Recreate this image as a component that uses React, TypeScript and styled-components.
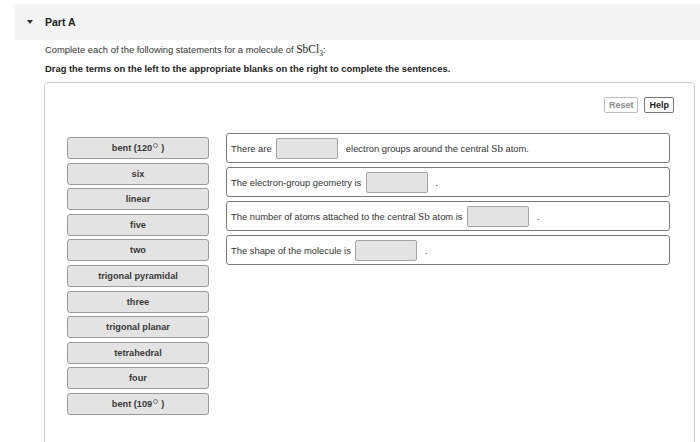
import React from "react";
import styled, { createGlobalStyle } from "styled-components";

const GlobalStyle = createGlobalStyle`
  html, body {
    margin: 0;
    padding: 0;
    background: #ffffff;
    font-family: "Liberation Sans", Arial, sans-serif;
    color: #333333;
  }
`;

const Page = styled.div`
  width: 700px;
  height: 442px;
  overflow: hidden;
  padding-top: 4px;
  box-sizing: border-box;
`;

const PartHeader = styled.div`
  margin-left: 15px;
  height: 36px;
  background: #f4f4f4;
  display: flex;
  align-items: center;
  padding-left: 12px;
  gap: 12px;
  font-size: 10.5px;
  font-weight: bold;
  color: #222;
`;

const Caret = styled.span`
  width: 0;
  height: 0;
  border-left: 3.5px solid transparent;
  border-right: 3.5px solid transparent;
  border-top: 4px solid #333;
`;

const Body = styled.div`
  padding-left: 45px;
  padding-right: 5px;
`;

const Intro = styled.p`
  margin: 3px 0 0;
  height: 14px;
  font-size: 9.4px;
  line-height: 14px;
  color: #333;
`;

const Instruction = styled.p`
  margin: 5px 0 0;
  height: 14px;
  font-size: 9.4px;
  font-weight: bold;
  line-height: 14px;
  color: #222;
`;

const Formula = styled.span`
  font-family: "Liberation Serif", "Times New Roman", serif;
  font-size: 11.5px;
  line-height: 0;
  color: #222;
`;

const Sub = styled.sub`
  font-size: 7.5px;
  line-height: 0;
`;

const Panel = styled.div`
  margin: 6px 0 0 -1px;
  border: 1px solid #cfcfcf;
  border-radius: 4px;
  height: 400px;
  padding: 14px 20px 0 22px;
  box-sizing: border-box;
`;

const Toolbar = styled.div`
  display: flex;
  justify-content: flex-end;
  gap: 6px;
`;

const ToolButton = styled.button<{ $muted?: boolean }>`
  font-family: "Liberation Sans", Arial, sans-serif;
  font-size: 9px;
  font-weight: bold;
  height: 16px;
  padding: 0 4px;
  background: #fff;
  border: 1px solid ${({ $muted }) => ($muted ? "#bdbdbd" : "#777")};
  color: ${({ $muted }) => ($muted ? "#8a8a8a" : "#222")};
  border-radius: 2px;
`;

const Workspace = styled.div`
  display: flex;
  gap: 17px;
  margin-top: 20px;
`;

const TermList = styled.div`
  display: flex;
  flex-direction: column;
  gap: 3.6px;
  width: 142px;
  margin-top: 4px;
`;

const Term = styled.div`
  height: 22px;
  box-sizing: border-box;
  background: #e3e3e3;
  border: 1px solid #9a9a9a;
  border-radius: 3px;
  display: flex;
  align-items: center;
  justify-content: center;
  font-size: 9.2px;
  font-weight: bold;
  color: #3a3a3a;
`;

const Degree = styled.span`
  display: inline-block;
  width: 3px;
  height: 3px;
  border: 0.8px solid #777;
  border-radius: 50%;
  align-self: flex-start;
  margin: 5px 3px 0 1px;
`;

const SentenceList = styled.div`
  display: flex;
  flex-direction: column;
  gap: 4px;
  width: 444px;
`;

const Sentence = styled.div`
  height: 30px;
  box-sizing: border-box;
  border: 1px solid #7a7a7a;
  border-radius: 3px;
  display: flex;
  align-items: center;
  padding-left: 4px;
  font-size: 9.4px;
  color: #333;
  white-space: pre;
`;

const Blank = styled.span`
  display: inline-block;
  width: 62px;
  height: 21px;
  box-sizing: border-box;
  background: #e4e4e4;
  border: 1px solid #a5a5a5;
  border-radius: 2px;
  margin: 0 5px 0 2px;
`;

const Sb = styled.span`
  font-family: "Liberation Serif", "Times New Roman", serif;
  font-size: 11px;
`;

const terms: { label: string; degree?: boolean }[] = [
  { label: "bent (120", degree: true },
  { label: "six" },
  { label: "linear" },
  { label: "five" },
  { label: "two" },
  { label: "trigonal pyramidal" },
  { label: "three" },
  { label: "trigonal planar" },
  { label: "tetrahedral" },
  { label: "four" },
  { label: "bent (109", degree: true },
];

export default function App() {
  return (
    <Page>
      <GlobalStyle />
      <PartHeader>
        <Caret />
        Part A
      </PartHeader>
      <Body>
        <Intro>
          Complete each of the following statements for a molecule of{" "}
          <Formula>
            SbCl<Sub>3</Sub>
          </Formula>
          :
        </Intro>
        <Instruction>
          Drag the terms on the left to the appropriate blanks on the right to complete the sentences.
        </Instruction>
        <Panel>
          <Toolbar>
            <ToolButton $muted>Reset</ToolButton>
            <ToolButton>Help</ToolButton>
          </Toolbar>
          <Workspace>
            <TermList>
              {terms.map((t) => (
                <Term key={t.label}>
                  {t.label}
                  {t.degree && (
                    <>
                      <Degree />)
                    </>
                  )}
                </Term>
              ))}
            </TermList>
            <SentenceList>
              <Sentence>
                {"There are "}
                <Blank />
                {" electron groups around the central "}
                <Sb>Sb</Sb>
                {" atom."}
              </Sentence>
              <Sentence>
                {"The electron-group geometry is "}
                <Blank />
                {" ."}
              </Sentence>
              <Sentence>
                {"The number of atoms attached to the central "}
                <Sb>Sb</Sb>
                {" atom is "}
                <Blank />
                {" ."}
              </Sentence>
              <Sentence>
                {"The shape of the molecule is "}
                <Blank />
                {" ."}
              </Sentence>
            </SentenceList>
          </Workspace>
        </Panel>
      </Body>
    </Page>
  );
}
